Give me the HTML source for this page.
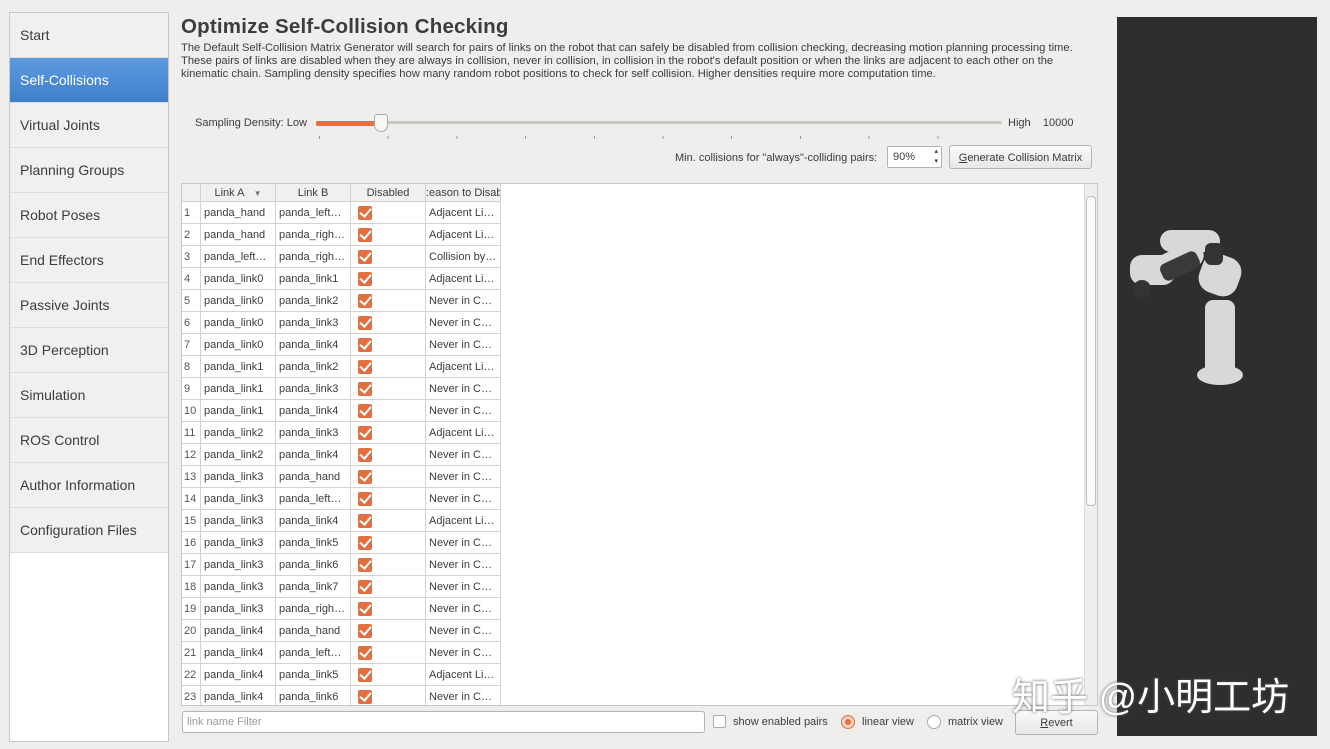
<!DOCTYPE html>
<html><head><meta charset="utf-8"><style>
*{margin:0;padding:0;box-sizing:border-box}
body{width:1330px;height:749px;background:#efeeec;font-family:"Liberation Sans","DejaVu Sans",sans-serif;position:relative;overflow:hidden;color:#3c3c3c}
.abs{position:absolute}
.side{left:9px;top:12px;width:160px;height:730px;background:#fff;border:1px solid #c9c7c3}
.it{position:absolute;left:0;width:158px;height:45px;background:#f1f0ee;border-bottom:1px solid #ddd;font-size:14px;line-height:45px;padding-left:10px;color:#3c3c3c}
.it.sel{color:#fff;background:linear-gradient(#5d9ae0,#3f7fca)}
h1{position:absolute;left:181px;top:15px;font-size:20.5px;letter-spacing:0.2px;font-weight:bold;color:#3c3c3c}
.desc{left:181px;top:42px;width:920px;font-size:11.2px;line-height:13px;color:#3c3c3c;white-space:nowrap}
table{border-collapse:collapse;font-size:11px;table-layout:fixed}
td,th{border:1px solid #d4d2ce;height:22px;padding:0 3px;white-space:nowrap;overflow:hidden}
th{height:18px;font-weight:normal;background:#f1f0ee;text-align:center}
td:first-child{padding:0 2px;color:#555}
.cb{display:inline-block;width:14px;height:14px;background:#e0703f;border-radius:2px;position:relative;vertical-align:middle;margin-left:4px}
.cb:after{content:"";position:absolute;left:4px;top:0px;width:5px;height:9px;border:solid #fff;border-width:0 2px 2px 0;transform:rotate(40deg)}
.btn{border:1px solid #b5b3af;border-radius:3px;background:linear-gradient(#fafafa,#e8e7e5);font-size:11px;text-align:center}
</style></head><body>
<div class="abs side">
<div class="it" style="top:0">Start</div>
<div class="it sel" style="top:45px">Self-Collisions</div>
<div class="it" style="top:90px">Virtual Joints</div>
<div class="it" style="top:135px">Planning Groups</div>
<div class="it" style="top:180px">Robot Poses</div>
<div class="it" style="top:225px">End Effectors</div>
<div class="it" style="top:270px">Passive Joints</div>
<div class="it" style="top:315px">3D Perception</div>
<div class="it" style="top:360px">Simulation</div>
<div class="it" style="top:405px">ROS Control</div>
<div class="it" style="top:450px">Author Information</div>
<div class="it" style="top:495px">Configuration Files</div>
</div>
<h1>Optimize Self-Collision Checking</h1>
<div class="abs desc">The Default Self-Collision Matrix Generator will search for pairs of links on the robot that can safely be disabled from collision checking, decreasing motion planning processing time.<br>These pairs of links are disabled when they are always in collision, never in collision, in collision in the robot's default position or when the links are adjacent to each other on the<br>kinematic chain. Sampling density specifies how many random robot positions to check for self collision. Higher densities require more computation time.</div>
<div class="abs" style="left:195px;top:117px;font-size:11px">Sampling Density: Low</div>
<div class="abs" style="left:316px;top:121px;width:686px;height:3px;background:#c9c7c3;border-radius:2px"></div>
<div class="abs" style="left:316px;top:121px;width:66px;height:5px;background:#e0703f;border-radius:2px"></div>
<div class="abs" style="left:374px;top:114px;width:14px;height:18px;background:#f6f6f5;border:1px solid #aaa;border-radius:3px 3px 7px 7px"></div>
<div class="abs" style="left:1008px;top:117px;font-size:11px">High&nbsp;&nbsp;&nbsp;&nbsp;10000</div>
<div class="abs" style="left:316px;top:136px;width:690px;height:3px;background:repeating-linear-gradient(90deg,transparent 0 3px,#999 3px 4px,transparent 4px 68.7px)"></div>
<div class="abs" style="left:675px;top:152px;font-size:11px">Min. collisions for "always"-colliding pairs:</div>
<div class="abs" style="left:887px;top:146px;width:55px;height:22px;background:#fff;border:1px solid #b5b3af;border-radius:2px;font-size:11px;padding:4px 5px">90%<span style="position:absolute;right:3px;top:0;font-size:7px;line-height:10px">▴<br>▾</span></div>
<div class="abs btn" style="left:949px;top:145px;width:143px;height:24px;line-height:24px"><u>G</u>enerate Collision Matrix</div>
<div class="abs" style="left:181px;top:183px;width:917px;height:523px;background:#fff;border:1px solid #c9c7c3;overflow:hidden">
<table style="width:320px;margin:-1px 0 0 -1px">
<colgroup><col style="width:19px"><col style="width:75px"><col style="width:75px"><col style="width:75px"><col style="width:75px"></colgroup>
<tr><th></th><th>Link A&nbsp;&nbsp;&nbsp;<span style="font-size:8px;color:#777">▼</span></th><th>Link B</th><th>Disabled</th><th style="text-align:left;padding:0">:eason to Disab</th></tr>
<tr><td>1</td><td>panda_hand</td><td>panda_left…</td><td><span class="cb"></span></td><td>Adjacent Li…</td></tr>
<tr><td>2</td><td>panda_hand</td><td>panda_righ…</td><td><span class="cb"></span></td><td>Adjacent Li…</td></tr>
<tr><td>3</td><td>panda_left…</td><td>panda_righ…</td><td><span class="cb"></span></td><td>Collision by…</td></tr>
<tr><td>4</td><td>panda_link0</td><td>panda_link1</td><td><span class="cb"></span></td><td>Adjacent Li…</td></tr>
<tr><td>5</td><td>panda_link0</td><td>panda_link2</td><td><span class="cb"></span></td><td>Never in C…</td></tr>
<tr><td>6</td><td>panda_link0</td><td>panda_link3</td><td><span class="cb"></span></td><td>Never in C…</td></tr>
<tr><td>7</td><td>panda_link0</td><td>panda_link4</td><td><span class="cb"></span></td><td>Never in C…</td></tr>
<tr><td>8</td><td>panda_link1</td><td>panda_link2</td><td><span class="cb"></span></td><td>Adjacent Li…</td></tr>
<tr><td>9</td><td>panda_link1</td><td>panda_link3</td><td><span class="cb"></span></td><td>Never in C…</td></tr>
<tr><td>10</td><td>panda_link1</td><td>panda_link4</td><td><span class="cb"></span></td><td>Never in C…</td></tr>
<tr><td>11</td><td>panda_link2</td><td>panda_link3</td><td><span class="cb"></span></td><td>Adjacent Li…</td></tr>
<tr><td>12</td><td>panda_link2</td><td>panda_link4</td><td><span class="cb"></span></td><td>Never in C…</td></tr>
<tr><td>13</td><td>panda_link3</td><td>panda_hand</td><td><span class="cb"></span></td><td>Never in C…</td></tr>
<tr><td>14</td><td>panda_link3</td><td>panda_left…</td><td><span class="cb"></span></td><td>Never in C…</td></tr>
<tr><td>15</td><td>panda_link3</td><td>panda_link4</td><td><span class="cb"></span></td><td>Adjacent Li…</td></tr>
<tr><td>16</td><td>panda_link3</td><td>panda_link5</td><td><span class="cb"></span></td><td>Never in C…</td></tr>
<tr><td>17</td><td>panda_link3</td><td>panda_link6</td><td><span class="cb"></span></td><td>Never in C…</td></tr>
<tr><td>18</td><td>panda_link3</td><td>panda_link7</td><td><span class="cb"></span></td><td>Never in C…</td></tr>
<tr><td>19</td><td>panda_link3</td><td>panda_righ…</td><td><span class="cb"></span></td><td>Never in C…</td></tr>
<tr><td>20</td><td>panda_link4</td><td>panda_hand</td><td><span class="cb"></span></td><td>Never in C…</td></tr>
<tr><td>21</td><td>panda_link4</td><td>panda_left…</td><td><span class="cb"></span></td><td>Never in C…</td></tr>
<tr><td>22</td><td>panda_link4</td><td>panda_link5</td><td><span class="cb"></span></td><td>Adjacent Li…</td></tr>
<tr><td>23</td><td>panda_link4</td><td>panda_link6</td><td><span class="cb"></span></td><td>Never in C…</td></tr>
</table>
<div class="abs" style="right:0;top:0;width:13px;height:100%;background:#efeeec;border-left:1px solid #ddd"><div style="margin:12px 1px;height:310px;background:#fafafa;border:1px solid #bbb;border-radius:4px"></div></div>
</div>
<div class="abs" style="left:182px;top:711px;width:523px;height:22px;background:#fff;border:1px solid #b5b3af;border-radius:3px;font-size:11px;color:#999;padding:4px 4px">link name Filter</div>
<div class="abs" style="left:713px;top:715px;width:13px;height:13px;background:#fff;border:1px solid #aaa;border-radius:2px"></div>
<div class="abs" style="left:733px;top:716px;font-size:11px">show enabled pairs</div>
<div class="abs" style="left:841px;top:715px;width:14px;height:14px;border-radius:50%;background:#f3d1c2;border:1px solid #e0703f"><div style="margin:3px;width:6px;height:6px;border-radius:50%;background:#e0703f"></div></div>
<div class="abs" style="left:862px;top:716px;font-size:11px">linear view</div>
<div class="abs" style="left:927px;top:715px;width:14px;height:14px;border-radius:50%;background:#fff;border:1px solid #aaa"></div>
<div class="abs" style="left:948px;top:716px;font-size:11px">matrix view</div>
<div class="abs btn" style="left:1015px;top:710px;width:83px;height:25px;line-height:25px"><u>R</u>evert</div>
<div class="abs" style="left:1117px;top:17px;width:200px;height:719px;background:#2e2e2e"></div>
<svg class="abs" style="left:1125px;top:225px" width="125" height="165">
<g fill="#d8d8d8">
<rect x="80" y="75" width="30" height="80" rx="8"/>
<ellipse cx="95" cy="150" rx="23" ry="10"/>
<rect x="75" y="30" width="40" height="40" rx="15" transform="rotate(20 95 50)"/>
<rect x="35" y="5" width="60" height="22" rx="11"/>
<rect x="5" y="30" width="45" height="30" rx="12"/>
<rect x="20" y="25" width="60" height="25" rx="12" transform="rotate(-25 50 37)"/>
</g>
<rect x="8" y="55" width="18" height="18" rx="9" fill="#333"/>
<rect x="35" y="32" width="40" height="18" rx="6" fill="#3a3a3a" transform="rotate(-25 55 41)"/>
<rect x="80" y="18" width="18" height="22" rx="6" fill="#333"/>
</svg>
<div class="abs" style="left:1012px;top:666px;font-size:38px;color:#fff;font-family:'Liberation Sans','Noto Sans CJK SC',sans-serif;text-shadow:0 0 3px #555">知乎 @小明工坊</div>
</body></html>
